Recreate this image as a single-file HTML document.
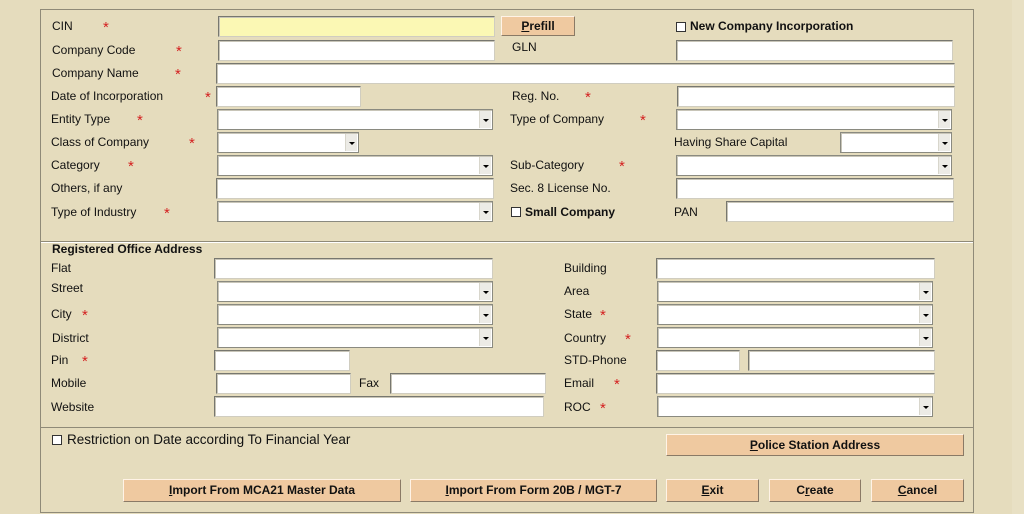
<!DOCTYPE html>
<html><head><meta charset="utf-8"><style>
*{margin:0;padding:0;box-sizing:border-box}
body{width:1024px;height:514px;background:#e5dcbd;position:relative;overflow:hidden;font-family:"Liberation Sans",Arial,sans-serif;font-size:12px;color:#111}
.a{position:absolute}
.l{position:absolute;white-space:nowrap;line-height:14px}
.s{position:absolute;color:#d42020;font-size:15px;line-height:14px}
.i{position:absolute;background:#fff;border:1px solid #8a8a80;border-top-color:#77776f;border-left-color:#77776f;border-right-color:#d0cdc0;border-bottom-color:#d0cdc0;box-shadow:inset 1px 1px 0 #c8c5b8}
.d{position:absolute;background:#fff;border:1px solid #8a8a80;box-shadow:inset 1px 1px 0 #c8c5b8}
.d::after{content:"";position:absolute;right:1px;top:1px;bottom:1px;width:11px;background:#ecebe6;border-left:1px solid #d8d6cc}
.d::before{content:"";position:absolute;right:3px;top:50%;margin-top:-1px;border-left:3px solid transparent;border-right:3px solid transparent;border-top:3px solid #000;z-index:2}
.b{position:absolute;background:#efc9a0;border:1px solid #fff3e6;border-right-color:#8a7a66;border-bottom-color:#8a7a66;font-weight:bold;text-align:center;font-size:12px}
.cb{position:absolute;width:10px;height:10px;border:1px solid #333;background:#fff}
</style></head><body>
<div class="a" style="left:40px;top:9px;width:934px;height:504px;border:1px solid #8f8a78"></div>
<div class="a" style="left:41px;top:241px;width:932px;height:2px;background:#8f8a78;border-bottom:1px solid #fff"></div>
<div class="a" style="left:41px;top:427px;width:932px;height:1px;background:#8f8a78"></div>
<div class="a" style="left:1012px;top:0;width:12px;height:514px;background:#e8e0c4"></div>

<div class="l" style="left:52px;top:19px">CIN</div><div class="s" style="left:103px;top:21px">*</div>
<div class="i" style="left:218px;top:16px;width:277px;height:21px;background:#fbf8b4"></div>
<div class="b" style="left:501px;top:16px;width:74px;height:20px;line-height:18px"><u>P</u>refill</div>
<div class="cb" style="left:676px;top:22px"></div><div class="l" style="left:690px;top:19px;font-weight:bold">New Company Incorporation</div>

<div class="l" style="left:52px;top:43px">Company Code</div><div class="s" style="left:176px;top:45px">*</div>
<div class="i" style="left:218px;top:40px;width:277px;height:21px"></div>
<div class="l" style="left:512px;top:40px">GLN</div>
<div class="i" style="left:676px;top:40px;width:277px;height:21px"></div>

<div class="l" style="left:52px;top:66px">Company Name</div><div class="s" style="left:175px;top:68px">*</div>
<div class="i" style="left:216px;top:63px;width:739px;height:21px"></div>

<div class="l" style="left:51px;top:89px">Date of Incorporation</div><div class="s" style="left:205px;top:91px">*</div>
<div class="i" style="left:216px;top:86px;width:145px;height:21px"></div>
<div class="l" style="left:512px;top:89px">Reg. No.</div><div class="s" style="left:585px;top:91px">*</div>
<div class="i" style="left:677px;top:86px;width:278px;height:21px"></div>

<div class="l" style="left:51px;top:112px">Entity Type</div><div class="s" style="left:137px;top:114px">*</div>
<div class="d" style="left:217px;top:109px;width:276px;height:21px"></div>
<div class="l" style="left:510px;top:112px">Type of Company</div><div class="s" style="left:640px;top:114px">*</div>
<div class="d" style="left:676px;top:109px;width:276px;height:21px"></div>

<div class="l" style="left:51px;top:135px">Class of Company</div><div class="s" style="left:189px;top:137px">*</div>
<div class="d" style="left:217px;top:132px;width:142px;height:21px"></div>
<div class="l" style="left:674px;top:135px">Having Share Capital</div>
<div class="d" style="left:840px;top:132px;width:112px;height:21px"></div>

<div class="l" style="left:51px;top:158px">Category</div><div class="s" style="left:128px;top:160px">*</div>
<div class="d" style="left:217px;top:155px;width:276px;height:21px"></div>
<div class="l" style="left:510px;top:158px">Sub-Category</div><div class="s" style="left:619px;top:160px">*</div>
<div class="d" style="left:676px;top:155px;width:276px;height:21px"></div>

<div class="l" style="left:51px;top:181px">Others, if any</div>
<div class="i" style="left:216px;top:178px;width:278px;height:21px"></div>
<div class="l" style="left:510px;top:181px">Sec. 8 License No.</div>
<div class="i" style="left:676px;top:178px;width:278px;height:21px"></div>

<div class="l" style="left:51px;top:205px">Type of Industry</div><div class="s" style="left:164px;top:207px">*</div>
<div class="d" style="left:217px;top:201px;width:276px;height:21px"></div>
<div class="cb" style="left:511px;top:207px"></div><div class="l" style="left:525px;top:205px;font-weight:bold">Small Company</div>
<div class="l" style="left:674px;top:205px">PAN</div>
<div class="i" style="left:726px;top:201px;width:228px;height:21px"></div>

<div class="l" style="left:52px;top:242px;font-weight:bold">Registered Office Address</div>
<div class="l" style="left:51px;top:261px">Flat</div>
<div class="i" style="left:214px;top:258px;width:279px;height:21px"></div>
<div class="l" style="left:564px;top:261px">Building</div>
<div class="i" style="left:656px;top:258px;width:279px;height:21px"></div>

<div class="l" style="left:51px;top:281px">Street</div>
<div class="d" style="left:217px;top:281px;width:276px;height:21px"></div>
<div class="l" style="left:564px;top:284px">Area</div>
<div class="d" style="left:657px;top:281px;width:276px;height:21px"></div>

<div class="l" style="left:51px;top:307px">City</div><div class="s" style="left:82px;top:309px">*</div>
<div class="d" style="left:217px;top:304px;width:276px;height:21px"></div>
<div class="l" style="left:564px;top:307px">State</div><div class="s" style="left:600px;top:309px">*</div>
<div class="d" style="left:657px;top:304px;width:276px;height:21px"></div>

<div class="l" style="left:52px;top:331px">District</div>
<div class="d" style="left:217px;top:327px;width:276px;height:21px"></div>
<div class="l" style="left:564px;top:331px">Country</div><div class="s" style="left:625px;top:333px">*</div>
<div class="d" style="left:657px;top:327px;width:276px;height:21px"></div>

<div class="l" style="left:51px;top:353px">Pin</div><div class="s" style="left:82px;top:355px">*</div>
<div class="i" style="left:214px;top:350px;width:136px;height:21px"></div>
<div class="l" style="left:564px;top:353px">STD-Phone</div>
<div class="i" style="left:656px;top:350px;width:84px;height:21px"></div>
<div class="i" style="left:748px;top:350px;width:187px;height:21px"></div>

<div class="l" style="left:51px;top:376px">Mobile</div>
<div class="i" style="left:216px;top:373px;width:135px;height:21px"></div>
<div class="l" style="left:359px;top:376px">Fax</div>
<div class="i" style="left:390px;top:373px;width:156px;height:21px"></div>
<div class="l" style="left:564px;top:376px">Email</div><div class="s" style="left:614px;top:378px">*</div>
<div class="i" style="left:656px;top:373px;width:279px;height:21px"></div>

<div class="l" style="left:51px;top:400px">Website</div>
<div class="i" style="left:214px;top:396px;width:330px;height:21px"></div>
<div class="l" style="left:564px;top:400px">ROC</div><div class="s" style="left:600px;top:402px">*</div>
<div class="d" style="left:657px;top:396px;width:276px;height:21px"></div>

<div class="cb" style="left:52px;top:435px"></div>
<div class="l" style="left:67px;top:433px;font-size:13.5px">Restriction on Date according To Financial Year</div>
<div class="b" style="left:666px;top:434px;width:298px;height:22px;line-height:20px"><u>P</u>olice Station Address</div>

<div class="b" style="left:123px;top:479px;width:278px;height:23px;line-height:21px"><u>I</u>mport From MCA21 Master Data</div>
<div class="b" style="left:410px;top:479px;width:247px;height:23px;line-height:21px"><u>I</u>mport From Form 20B / MGT-7</div>
<div class="b" style="left:666px;top:479px;width:93px;height:23px;line-height:21px"><u>E</u>xit</div>
<div class="b" style="left:769px;top:479px;width:92px;height:23px;line-height:21px">C<u>r</u>eate</div>
<div class="b" style="left:871px;top:479px;width:93px;height:23px;line-height:21px"><u>C</u>ancel</div>
</body></html>
